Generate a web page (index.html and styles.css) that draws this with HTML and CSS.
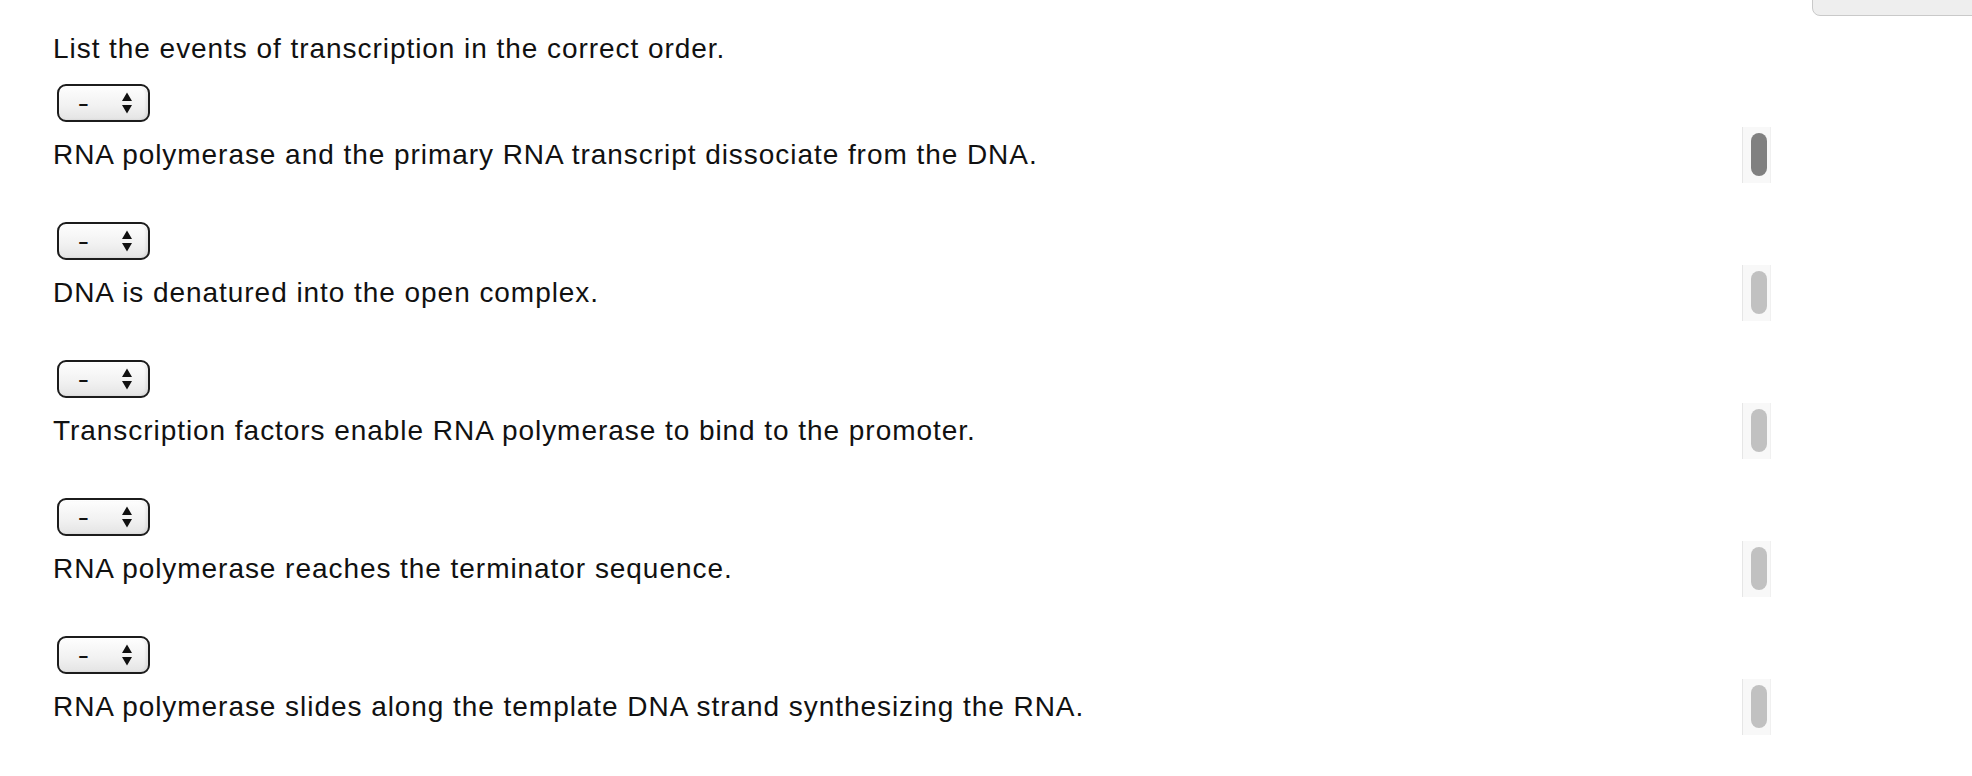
FILE: index.html
```html
<!DOCTYPE html>
<html>
<head>
    <meta charset="UTF-8">
    <title>Transcription order</title>
    <link rel="stylesheet" href="styles.css">
</head>
<body>
    <div class="corner-btn"></div>
    <div class="quiz">
        <div class="quiz-title">List the events of transcription in the correct order.</div>
        <div class="quiz-list">
            <div class="quiz-item">
                <div class="pick"><span class="pick-value">-</span><svg class="pick-arrows" width="12" height="24" viewBox="0 0 12 24"><path d="M6 1.5 L11 10 L1 10 Z M1 14 L11 14 L6 22.5 Z" fill="#111"/></svg></div>
                <div class="quiz-row">
                    <div class="quiz-text">RNA polymerase and the primary RNA transcript dissociate from the DNA.</div>
                    <div class="handle"><div class="handle-thumb dark"></div></div>
                </div>
            </div>
            <div class="quiz-item">
                <div class="pick"><span class="pick-value">-</span><svg class="pick-arrows" width="12" height="24" viewBox="0 0 12 24"><path d="M6 1.5 L11 10 L1 10 Z M1 14 L11 14 L6 22.5 Z" fill="#111"/></svg></div>
                <div class="quiz-row">
                    <div class="quiz-text">DNA is denatured into the open complex.</div>
                    <div class="handle"><div class="handle-thumb"></div></div>
                </div>
            </div>
            <div class="quiz-item">
                <div class="pick"><span class="pick-value">-</span><svg class="pick-arrows" width="12" height="24" viewBox="0 0 12 24"><path d="M6 1.5 L11 10 L1 10 Z M1 14 L11 14 L6 22.5 Z" fill="#111"/></svg></div>
                <div class="quiz-row">
                    <div class="quiz-text">Transcription factors enable RNA polymerase to bind to the promoter.</div>
                    <div class="handle"><div class="handle-thumb"></div></div>
                </div>
            </div>
            <div class="quiz-item">
                <div class="pick"><span class="pick-value">-</span><svg class="pick-arrows" width="12" height="24" viewBox="0 0 12 24"><path d="M6 1.5 L11 10 L1 10 Z M1 14 L11 14 L6 22.5 Z" fill="#111"/></svg></div>
                <div class="quiz-row">
                    <div class="quiz-text">RNA polymerase reaches the terminator sequence.</div>
                    <div class="handle"><div class="handle-thumb"></div></div>
                </div>
            </div>
            <div class="quiz-item">
                <div class="pick"><span class="pick-value">-</span><svg class="pick-arrows" width="12" height="24" viewBox="0 0 12 24"><path d="M6 1.5 L11 10 L1 10 Z M1 14 L11 14 L6 22.5 Z" fill="#111"/></svg></div>
                <div class="quiz-row">
                    <div class="quiz-text">RNA polymerase slides along the template DNA strand synthesizing the RNA.</div>
                    <div class="handle"><div class="handle-thumb"></div></div>
                </div>
            </div>
        </div>
    </div>
</body>
</html>
```

FILE: styles.css
```css
*{
    margin: 0;
    padding: 0;
    box-sizing: border-box;
}
html,body{
    width: 100%;
    height: 100%;
    background-color: #ffffff;
    font-family: "Liberation Sans", Arial, Helvetica, sans-serif;
    color: #111111;
    overflow: hidden;
}
.corner-btn{
    position: absolute;
    top: -30px;
    right: -20px;
    width: 180px;
    height: 46px;
    background-color: #eeeeee;
    border: 1px solid #c9c9c9;
    border-radius: 8px;
}
.quiz{
    padding: 32px 201px 0 53px;
}
.quiz-title{
    font-size: 28px;
    line-height: 34px;
    letter-spacing: 0.95px;
}
.quiz-list{
    margin-top: 18px;
    display: flex;
    flex-direction: column;
    gap: 39px;
}
.quiz-item{
    display: flex;
    flex-direction: column;
}
.pick{
    display: flex;
    align-items: center;
    justify-content: space-between;
    width: 93px;
    height: 38px;
    margin-left: 4px;
    padding: 0 15px 0 20px;
    border: 2px solid #1c1c1c;
    border-radius: 9px;
    background: linear-gradient(#fefefe, #f1f1f1 60%, #e4e4e4);
    box-shadow: inset 0 1px 1px #ffffff, inset -2px 0 3px rgba(0,0,0,0.08);
}
.pick-value{
    font-size: 26px;
    line-height: 22px;
    color: #111111;
    transform: scaleX(1.3);
}
.quiz-row{
    margin-top: 5px;
    height: 56px;
    display: flex;
    align-items: center;
    justify-content: space-between;
}
.quiz-text{
    font-size: 28px;
    line-height: 34px;
    letter-spacing: 0.95px;
}
.handle{
    width: 29px;
    height: 56px;
    padding: 6px 0 0 8px;
    background-color: #f8f8f8;
    border-left: 1px solid #e6e6e6;
    border-right: 1px solid #f0f0f0;
}
.handle-thumb{
    width: 16px;
    height: 43px;
    border-radius: 8px;
    background-color: #c1c1c1;
}
.handle-thumb.dark{
    background-color: #808080;
}
```
